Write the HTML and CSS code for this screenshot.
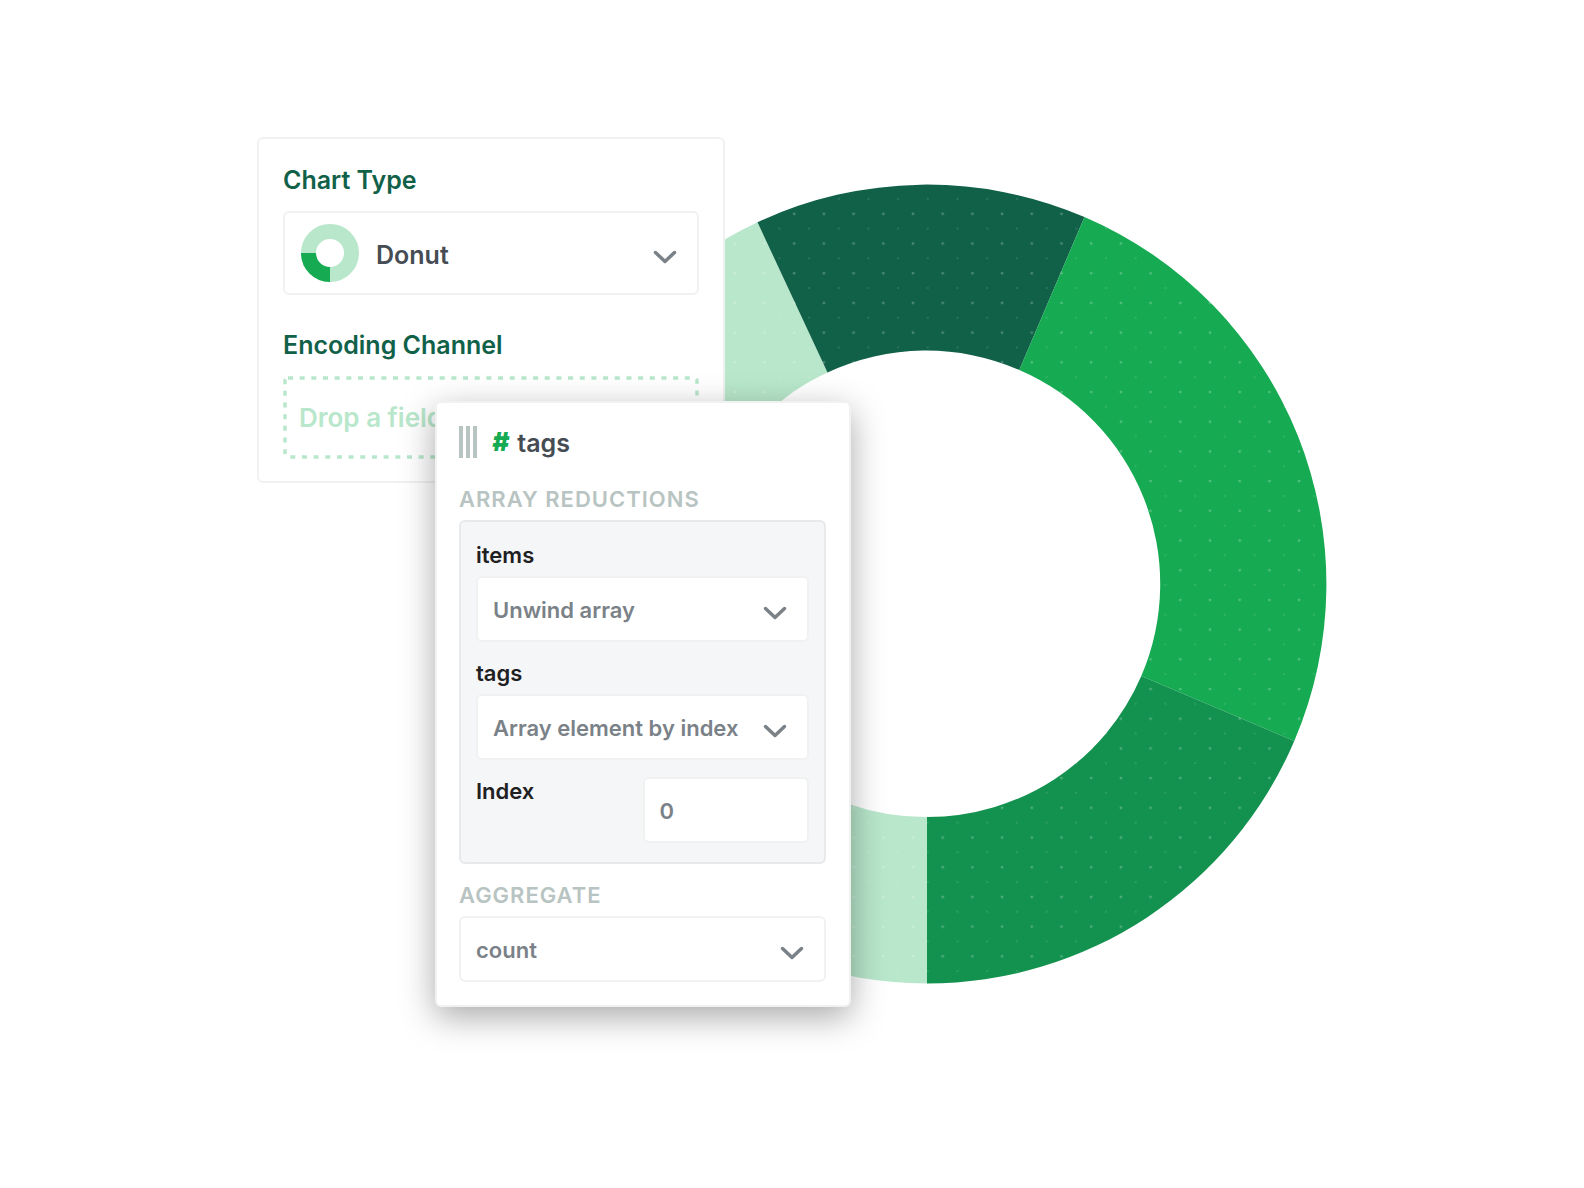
FILE: index.html
```
<!DOCTYPE html>
<html lang="en">
<head>
  <meta charset="UTF-8">
  <meta name="viewport" content="width=device-width, initial-scale=1.0">
  <title>Chart Builder</title>
  <link rel="stylesheet" href="styles.css">
</head>
<body>
  <main class="stage">
    <svg class="chart" viewBox="0 0 800 800" role="img" aria-label="Donut chart">
      <defs>
        <pattern id="dots" x="252.3" y="14.9" width="29.7" height="29.7" patternUnits="userSpaceOnUse">
          <circle cx="14.9" cy="14.9" r="1.4" fill="#fff" fill-opacity="0.25"/>
          <circle cx="0" cy="0" r="1" fill="#fff" fill-opacity="0.14"/>
          <circle cx="29.7" cy="0" r="1" fill="#fff" fill-opacity="0.14"/>
          <circle cx="0" cy="29.7" r="1" fill="#fff" fill-opacity="0.14"/>
          <circle cx="29.7" cy="29.7" r="1" fill="#fff" fill-opacity="0.14"/>
        </pattern>
      </defs>
      <path fill="#b8e7cb" d="M400 799.5A399.5 399.5 0 0 1 230.5 38.3L300.5 188.5A233 233 0 0 0 400 633Z"/>
      <path fill="#116149" d="M230.5 38.3A399.5 399.5 0 0 1 557.5 33L492.3 186A233 233 0 0 0 300.5 188.5Z"/>
      <path fill="#16aa52" d="M557.5 33A399.5 399.5 0 0 1 767.3 557L614.3 492A233 233 0 0 0 492.3 186Z"/>
      <path fill="#13924f" d="M767.3 557A399.5 399.5 0 0 1 400 799.5L400 633A233 233 0 0 0 614.3 492Z"/>
      <path fill="url(#dots)" fill-rule="evenodd" d="M400 .5A399.5 399.5 0 1 1 400 799.5A399.5 399.5 0 1 1 400 .5ZM400 167A233 233 0 1 0 400 633A233 233 0 1 0 400 167Z"/>
    </svg>

    <section class="panel">
      <label class="panel-label" for="chart-type">Chart Type</label>
      <div class="select select-large">
        <svg class="donut-icon" viewBox="0 0 58 58" aria-hidden="true">
          <circle cx="29" cy="29" r="21.5" fill="none" stroke="#b8e7cb" stroke-width="15"/>
          <path d="M29 50.5A21.5 21.5 0 0 1 7.5 29" fill="none" stroke="#16aa52" stroke-width="15"/>
        </svg>
        <select id="chart-type">
          <option>Donut</option>
        </select>
        <svg class="chevron" viewBox="0 0 24 14" aria-hidden="true"><path d="M2.5 2.5L12 11.5L21.5 2.5"/></svg>
      </div>
      <h2 class="panel-label">Encoding Channel</h2>
      <div class="dropzone">
        <svg class="dropzone-border" aria-hidden="true">
          <rect class="dashes" x="2" y="2" rx="3"/>
        </svg>
        Drop a field
      </div>
    </section>

    <section class="card">
      <header class="card-head">
        <span class="grip"></span>
        <span class="hash">#</span>
        <h2 class="card-title">tags</h2>
      </header>

      <h3 class="section-label">ARRAY REDUCTIONS</h3>
      <div class="reductions">
        <div class="field">
          <label for="items">items</label>
          <div class="select">
            <select id="items">
              <option>Unwind array</option>
            </select>
            <svg class="chevron" viewBox="0 0 24 14" aria-hidden="true"><path d="M2.5 2.5L12 11.5L21.5 2.5"/></svg>
          </div>
        </div>
        <div class="field">
          <label for="tags">tags</label>
          <div class="select">
            <select id="tags">
              <option>Array element by index</option>
            </select>
            <svg class="chevron" viewBox="0 0 24 14" aria-hidden="true"><path d="M2.5 2.5L12 11.5L21.5 2.5"/></svg>
          </div>
        </div>
        <div class="field-row">
          <label for="index">Index</label>
          <input type="text" id="index" value="0">
        </div>
      </div>

      <label class="section-label" for="aggregate">AGGREGATE</label>
      <div class="select">
        <select id="aggregate">
          <option>count</option>
        </select>
        <svg class="chevron" viewBox="0 0 24 14" aria-hidden="true"><path d="M2.5 2.5L12 11.5L21.5 2.5"/></svg>
      </div>
    </section>
  </main>
</body>
</html>
```

FILE: styles.css
```
* {
  box-sizing: border-box;
}

body {
  font-family: Inter, "Liberation Sans", Arial, sans-serif;
  font-weight: 600;
  margin: 0;
  padding: 137px 24px;
  background-color: #fff;
}

h2, h3 {
  margin: 0;
  font-weight: 600;
}

/* chart, panel and card share one cell and overlap */
.stage {
  display: grid;
  max-width: 1070px;
  margin: 0 auto;
}

.chart,
.panel,
.card {
  grid-area: 1 / 1;
  align-self: start;
}

.chart {
  justify-self: end;
  width: 75%;
  max-width: 800px;
  margin-top: 47px;
}

.panel {
  width: 100%;
  max-width: 468px;
  padding: 25px 24px 22px;
  border: 2px solid #f0f1f1;
  border-radius: 6px;
  background-color: #fff;
  z-index: 1;
}

.panel-label {
  display: block;
  margin-bottom: 15px;
  font-size: 25px;
  line-height: 32px;
  color: #116149;
}

.select {
  position: relative;
  display: flex;
  align-items: center;
  height: 66px;
  border: 2px solid #f0f1f1;
  border-radius: 6px;
  background-color: #fff;
}

select {
  flex: 1;
  min-width: 0;
  height: 100%;
  padding: 2px 56px 0 15px;
  border: none;
  background: none;
  appearance: none;
  font: inherit;
  font-size: 22px;
  color: #7a8288;
}

.chevron {
  position: absolute;
  right: 20px;
  width: 24px;
  margin-top: 8px;
  fill: none;
  stroke: #7a8288;
  stroke-width: 3.5;
  stroke-linecap: round;
  stroke-linejoin: round;
  pointer-events: none;
}

.select-large {
  height: 84px;
  margin-bottom: 34px;
  padding-left: 16px;
}

.select-large select {
  padding-top: 4px;
  padding-left: 17px;
  font-size: 25px;
  color: #464c53;
}

.donut-icon {
  width: 58px;
  height: 58px;
}

.dropzone {
  position: relative;
  display: flex;
  align-items: center;
  height: 83px;
  padding-left: 16px;
  font-size: 26px;
  color: #b8e7cb;
}

.dropzone-border {
  position: absolute;
  top: 0;
  left: 0;
  width: 100%;
  height: 100%;
}

.dashes {
  width: calc(100% - 4px);
  height: calc(100% - 4px);
  fill: none;
  stroke: #b8e7cb;
  stroke-width: 3.5;
  stroke-dasharray: 5 6.67;
}

.card {
  width: 100%;
  max-width: 416px;
  margin: 264px 0 0 178px;
  padding: 23px 23px 23px 22px;
  border: 2px solid #f0f1f1;
  border-radius: 6px;
  background-color: #fff;
  box-shadow: 0 10px 34px rgba(0, 0, 0, 0.34);
  z-index: 2;
}

.card-head {
  display: flex;
  align-items: center;
  height: 32px;
  margin-bottom: 27px;
  line-height: 32px;
}

.grip {
  width: 18px;
  height: 32px;
  margin-right: 15px;
  background: repeating-linear-gradient(to right, #b8c4c2 0 4px, transparent 4px 7px);
}

.hash {
  margin-right: 8px;
  font-size: 26px;
  font-style: italic;
  font-weight: 900;
  color: #16aa52;
}

.card-title {
  padding-top: 2px;
  font-size: 25px;
  color: #464c53;
}

.section-label {
  display: block;
  margin-bottom: 7px;
  font-size: 22px;
  line-height: 28px;
  letter-spacing: 1px;
  color: #b8c4c2;
}

.reductions {
  margin-bottom: 17px;
  padding: 19px 15px;
  border: 2px solid #e7e9eb;
  border-radius: 6px;
  background-color: #f4f6f8;
  font-size: 22px;
  line-height: 28px;
  color: #1f2021;
}

.field {
  margin-bottom: 17px;
}

.field label {
  display: block;
  margin-bottom: 7px;
}

.field-row {
  display: flex;
  justify-content: space-between;
}

.field-row input {
  width: 50%;
  height: 66px;
  padding: 2px 15px 0;
  border: 2px solid #f0f1f1;
  border-radius: 6px;
  background-color: #fff;
  font: inherit;
  color: #7a8288;
}
```
